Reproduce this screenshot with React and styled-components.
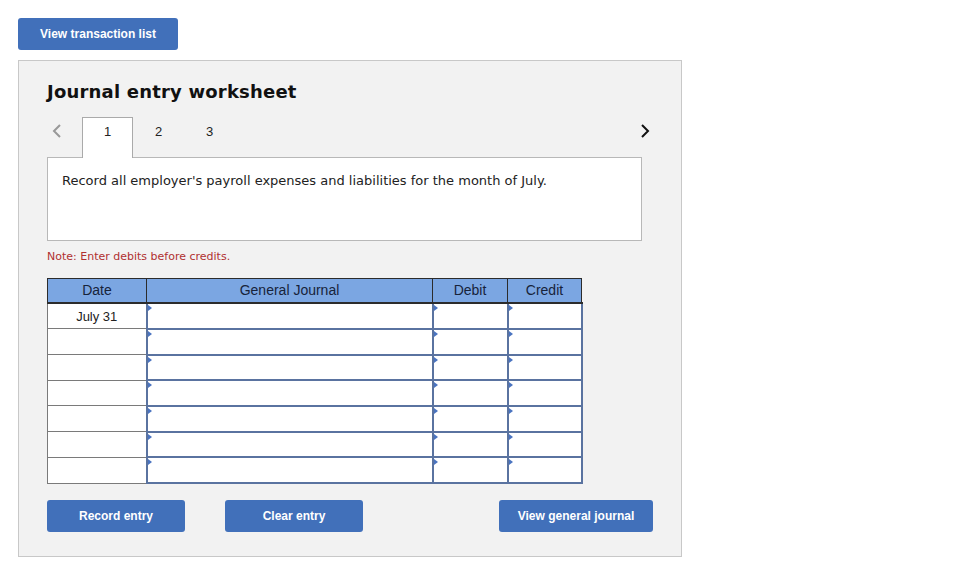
import React from 'react'
import styled, { createGlobalStyle } from 'styled-components'

const GlobalStyle = createGlobalStyle`
  body {
    margin: 0;
    background: #fff;
    font-family: 'DejaVu Sans', Verdana, sans-serif;
  }
`

const Page = styled.div`
  padding: 18px;
  width: 664px;
`

const Button = styled.button`
  font-family: 'Liberation Sans', Arial, sans-serif;
  font-weight: bold;
  font-size: 12px;
  color: #fff;
  background: #4170ba;
  border: none;
  border-radius: 3px;
  height: 32px;
  width: ${p => p.w}px;
  padding: 0;
  cursor: pointer;
`

const Panel = styled.div`
  margin-top: 10px;
  height: 497px;
  box-sizing: border-box;
  background: #f2f2f2;
  border: 1px solid #c8c8c8;
  padding: 20px 28px 24px;
  display: flex;
  flex-direction: column;
  align-items: flex-start;
`

const Title = styled.div`
  font-weight: bold;
  font-size: 18px;
  letter-spacing: 0.2px;
  line-height: 22px;
  color: #111;
`

const TabRow = styled.div`
  align-self: stretch;
  margin-top: 14px;
  height: 42px;
  display: flex;
  align-items: stretch;
  position: relative;
  z-index: 1;
`

const Arrow = styled.div`
  width: 35px;
  display: flex;
  align-items: center;
  box-sizing: border-box;
  padding: 0 ${p => (p.right ? '3px' : '0')} 13px ${p => (p.right ? '0' : '5px')};
  margin-left: ${p => (p.right ? 'auto' : '0')};
  justify-content: ${p => (p.right ? 'flex-end' : 'flex-start')};
`

const Tab = styled.div`
  width: 51px;
  box-sizing: border-box;
  display: flex;
  align-items: center;
  justify-content: center;
  font-family: 'Liberation Sans', Arial, sans-serif;
  font-size: 13px;
  color: #222;
  padding-bottom: 12px;
  background: ${p => (p.active ? '#fff' : 'transparent')};
  border: 1px solid ${p => (p.active ? '#aaa' : 'transparent')};
  border-bottom: none;
`

const Prompt = styled.div`
  margin-top: -1px;
  width: 595px;
  height: 85px;
  box-sizing: border-box;
  background: #fff;
  border: 1px solid #b8b8b8;
  padding: 15px 14px;
  font-size: 13px;
  color: #222;
`

const Note = styled.div`
  margin-top: 9px;
  font-size: 11px;
  color: #b03030;
`

const Table = styled.table`
  margin-top: 15px;
  width: 534px;
  table-layout: fixed;
  border-collapse: collapse;
  font-family: 'Liberation Sans', Arial, sans-serif;
  font-size: 13px;
  color: #222;
`

const Th = styled.th`
  height: 23px;
  padding: 0;
  font-size: 14px;
  font-weight: normal;
  background: #7ba6e2;
  color: #17233a;
  border: 1px solid #2c2c2c;
  border-bottom: 2px solid #2c2c2c;
`

const DateCell = styled.td`
  height: 24.7px;
  padding: 0;
  text-align: center;
  background: #fff;
  border: 1px solid #7a7a7a;
`

const InputCell = styled.td`
  height: 22.7px;
  padding: 0;
  background: #fff;
  border: 2px solid #5a73a0;
  position: relative;

  &::before {
    content: '';
    position: absolute;
    left: 0;
    top: 1px;
    border-top: 3px solid transparent;
    border-bottom: 3px solid transparent;
    border-left: 4px solid #4a74c0;
  }
`

const Actions = styled.div`
  align-self: stretch;
  margin-top: 16px;
  display: flex;
  align-items: center;
  gap: 40px;
`

const Spacer = styled.div`
  flex: 1;
`

const Chevron = ({ dir, color }) => (
  <svg width="10" height="16" viewBox="0 0 10 16">
    <path
      d={dir === 'left' ? 'M8 2 L2 8 L8 14' : 'M2 2 L8 8 L2 14'}
      fill="none"
      stroke={color}
      strokeWidth="2"
    />
  </svg>
)

const rows = ['July 31', '', '', '', '', '', '']

const App = () => {
  return (
    <Page>
      <GlobalStyle />
      <Button w={160}>View transaction list</Button>
      <Panel>
        <Title>Journal entry worksheet</Title>
        <TabRow>
          <Arrow>
            <Chevron dir="left" color="#999" />
          </Arrow>
          <Tab active>1</Tab>
          <Tab>2</Tab>
          <Tab>3</Tab>
          <Arrow right>
            <Chevron dir="right" color="#111" />
          </Arrow>
        </TabRow>
        <Prompt>Record all employer's payroll expenses and liabilities for the month of July.</Prompt>
        <Note>Note: Enter debits before credits.</Note>
        <Table>
          <colgroup>
            <col style={{ width: 99 }} />
            <col style={{ width: 286 }} />
            <col style={{ width: 75 }} />
            <col style={{ width: 74 }} />
          </colgroup>
          <thead>
            <tr>
              <Th>Date</Th>
              <Th>General Journal</Th>
              <Th>Debit</Th>
              <Th>Credit</Th>
            </tr>
          </thead>
          <tbody>
            {rows.map((d, i) => (
              <tr key={i}>
                <DateCell>{d}</DateCell>
                <InputCell />
                <InputCell />
                <InputCell />
              </tr>
            ))}
          </tbody>
        </Table>
        <Actions>
          <Button w={138}>Record entry</Button>
          <Button w={138}>Clear entry</Button>
          <Spacer />
          <Button w={154}>View general journal</Button>
        </Actions>
      </Panel>
    </Page>
  )
}

export default App
